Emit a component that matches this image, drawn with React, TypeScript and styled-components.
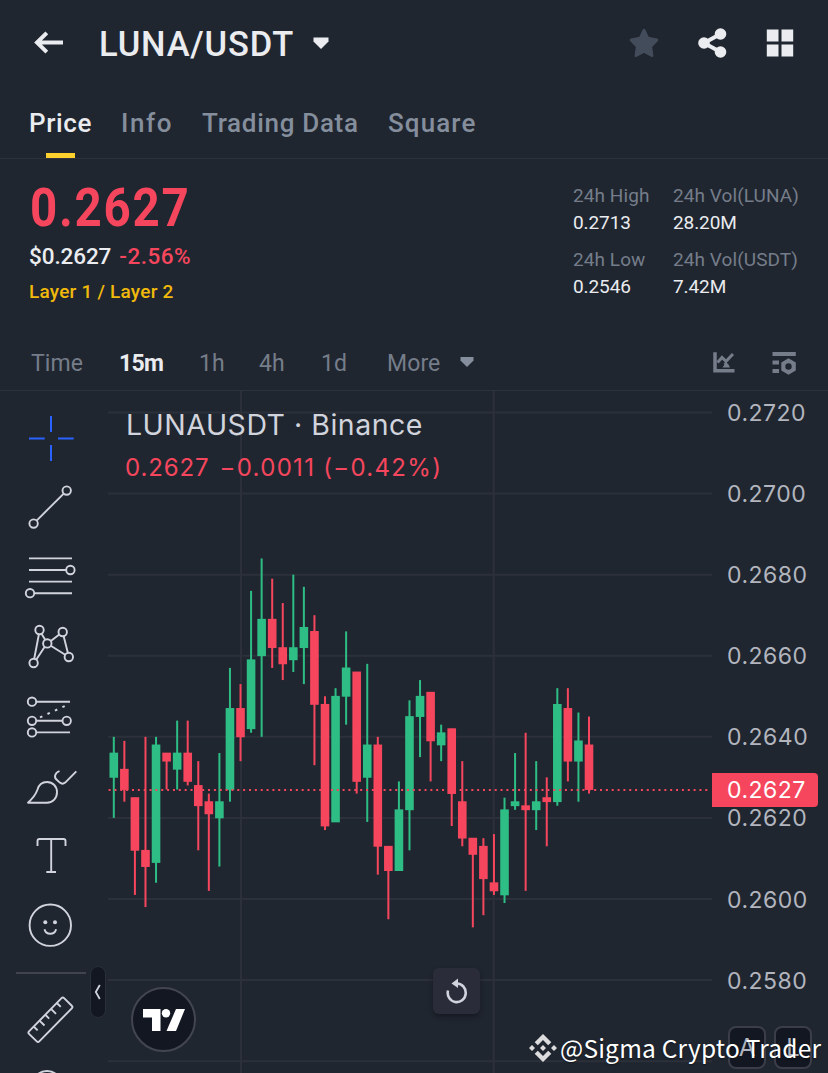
import React from 'react';
import styled, { createGlobalStyle } from 'styled-components';

const c = {
  bg: '#202630',
  line: '#2d323d',
  grid: '#2b303a',
  text: '#eaecef',
  muted: '#848e9c',
  dim: '#757d8a',
  red: '#f6465d',
  green: '#2ebd85',
  yellow: '#fcd02d',
  tool: '#d1d4dc',
};

const GlobalStyle = createGlobalStyle`
  * { box-sizing: border-box; }
  html, body { margin: 0; background: ${c.bg}; }
  body { overflow: hidden; }
`;

const Screen = styled.div`
  width: 828px;
  height: 1073px;
  display: flex;
  flex-direction: column;
  overflow: hidden;
  background: ${c.bg};
  color: ${c.text};
  font-family: Roboto, 'Liberation Sans', sans-serif;
  white-space: nowrap;
`;

const Header = styled.header`
  height: 88px;
  flex: none;
  display: flex;
  align-items: center;
  padding: 0 34px 3px 33px;
`;

const PairName = styled.h1`
  margin: 2px 0 0 36px;
  width: 194px;
  font-size: 34.5px;
  line-height: 44px;
  font-weight: 500;
  letter-spacing: 0.8px;
`;

const Caret = styled.svg<{ $gap: number }>`
  display: block;
  margin-left: ${(p) => p.$gap}px;
`;

const HeaderActions = styled.div`
  margin-left: auto;
  display: flex;
  align-items: center;
  gap: 39px;
`;

const Tabs = styled.nav`
  height: 71px;
  flex: none;
  display: flex;
  padding-left: 29px;
  border-bottom: 1px solid ${c.line};
`;

const Tab = styled.div<{ $active?: boolean; $width: number; $spacing: number }>`
  width: ${(p) => p.$width}px;
  display: flex;
  flex-direction: column;
  justify-content: space-between;
  padding-top: 19px;
  font-size: 26px;
  line-height: 32px;
  font-weight: 500;
  letter-spacing: ${(p) => p.$spacing}px;
  color: ${(p) => (p.$active ? c.text : c.muted)};
`;

const TabMark = styled.span`
  display: block;
  width: 29px;
  height: 5px;
  margin-left: 17px;
  background: ${c.yellow};
`;

const Summary = styled.section`
  height: 178px;
  flex: none;
  display: flex;
  justify-content: space-between;
  padding: 19px 24px 0 29px;
`;

const LastPrice = styled.div`
  width: 190px;
  height: 58px;
  padding-left: 1px;
  font-size: 54px;
  line-height: 60px;
  font-weight: 700;
  letter-spacing: 2px;
  color: ${c.red};
  transform: scaleX(0.88);
  transform-origin: left;
`;

const PriceLine = styled.div`
  display: flex;
  gap: 8px;
  margin-top: 5px;
  font-size: 22.5px;
  line-height: 30px;
  font-weight: 500;
  letter-spacing: -0.1px;
`;

const Change = styled.span`
  letter-spacing: 0.5px;
  color: ${c.red};
`;

const Category = styled.div`
  margin-top: 8px;
  font-size: 19px;
  line-height: 26px;
  font-weight: 500;
  letter-spacing: 0.22px;
  color: #f0b90b;
`;

const Stats = styled.div`
  display: grid;
  grid-template-columns: 100px 131px;
  grid-auto-rows: 64px;
  padding-top: 5px;
`;

const StatLabel = styled.div`
  font-size: 19px;
  line-height: 26px;
  letter-spacing: 0.08px;
  color: ${c.dim};
`;

const StatValue = styled.div`
  font-size: 19px;
  line-height: 27px;
  letter-spacing: -0.1px;
`;

const Intervals = styled.div`
  height: 54px;
  flex: none;
  display: flex;
  align-items: center;
  padding: 0 31px 1px 31px;
  border-bottom: 1px solid ${c.line};
`;

const Interval = styled.div<{ $active?: boolean; $width: number }>`
  width: ${(p) => p.$width}px;
  padding-top: 2px;
  font-size: 23px;
  line-height: 30px;
  font-weight: ${(p) => (p.$active ? 700 : 400)};
  letter-spacing: ${(p) => (p.$active ? -0.7 : 0.1)}px;
  color: ${(p) => (p.$active ? c.text : c.dim)};
`;

const IntervalActions = styled.div`
  margin-left: auto;
  display: flex;
  align-items: center;
  gap: 36px;
`;

const ChartArea = styled.main`
  flex: 1;
  min-height: 0;
  display: flex;
  position: relative;
  overflow: hidden;
`;

const Toolbar = styled.aside`
  width: 108px;
  flex: none;
  padding: 13px 0 0 16px;
  display: flex;
  flex-direction: column;
`;

const ToolIcon = styled.svg<{ $color?: string }>`
  display: block;
  flex: none;
  width: 70px;
  height: 70px;
  fill: none;
  stroke: ${(p) => p.$color || c.tool};
  stroke-width: 1.9;
`;

const ToolDivider = styled.div`
  width: 70px;
  height: 2px;
  flex: none;
  margin: 8px 0 11px;
  background: #41444f;
`;

const Plot = styled.div`
  width: 604px;
  flex: none;
  position: relative;
`;

const PlotCanvas = styled.svg`
  display: block;
`;

const Legend = styled.div`
  position: absolute;
  left: 17px;
  top: 13px;
  font-family: Inter, sans-serif;
`;

const LegendTitle = styled.div`
  padding-left: 1px;
  font-size: 28.5px;
  line-height: 41px;
  letter-spacing: 0.5px;
  color: #d1d4dc;
`;

const LegendValues = styled.div`
  display: flex;
  gap: 10px;
  margin-top: 5px;
  font-size: 24px;
  line-height: 36px;
  letter-spacing: 0.9px;
  color: ${c.red};
`;

const LegendChange = styled.span`
  letter-spacing: 1.3px;
`;

const Axis = styled.div`
  width: 116px;
  flex: none;
  position: relative;
  padding: 6px 0 0 15px;
  font-family: Inter, sans-serif;
  font-size: 23px;
  letter-spacing: 0.5px;
  color: #b2b5be;
`;

const AxisLabel = styled.div`
  height: 81.1px;
  line-height: 32px;
`;

const PriceTag = styled.div`
  position: absolute;
  left: 0;
  top: 382px;
  width: 106px;
  height: 34px;
  padding-left: 15px;
  line-height: 35px;
  border-radius: 0 4px 4px 0;
  background: ${c.red};
  color: #fff;
`;

const CollapseHandle = styled.button`
  position: absolute;
  left: 90px;
  top: 575px;
  width: 16px;
  height: 52px;
  padding: 0;
  display: grid;
  place-items: center;
  border: 1px solid #2a2e39;
  border-radius: 8px;
  background: #131722;
`;

const BrandBadge = styled.div`
  position: absolute;
  left: 131px;
  top: 596px;
  width: 65px;
  height: 65px;
  display: grid;
  place-items: center;
  border: 2px solid #434651;
  border-radius: 50%;
  background: #131722;
`;

const ResetButton = styled.button`
  position: absolute;
  left: 433px;
  top: 577px;
  width: 47px;
  height: 46px;
  padding: 0;
  display: grid;
  place-items: center;
  border: 0;
  border-radius: 6px;
  background: #2a2d39;
  box-shadow: 0 3px 5px rgba(10, 12, 18, 0.45);
`;

const ScaleButtons = styled.div`
  position: absolute;
  left: 728px;
  top: 635px;
  display: flex;
  gap: 8px;
`;

const ScaleButton = styled.button`
  width: 38px;
  height: 43px;
  padding: 0;
  border: 2px solid #3b3e49;
  border-radius: 8px;
  background: #131722;
  color: #b2b5be;
  font: 400 24px/36px Inter, sans-serif;
`;

const Watermark = styled.div`
  position: absolute;
  left: 529px;
  top: 638px;
  display: flex;
  align-items: center;
  gap: 3px;
  height: 38px;
  color: #fff;
  font-family: 'Noto Sans CJK SC', sans-serif;
  font-size: 24.5px;
  line-height: 38px;
  letter-spacing: 0.2px;
  text-shadow: 0 1px 2px rgba(0, 0, 0, 0.5);
`;

/* Prices are in units of 0.0001: high, body top, body bottom, low. */
type Candle = ['u' | 'd', number, number, number, number];
const candles: Candle[] = [
  ['u', 2640, 2636, 2630, 2620], ['d', 2639, 2632, 2627, 2624], ['d', 2625, 2625, 2612, 2601],
  ['d', 2640, 2612, 2608, 2598], ['u', 2640, 2638, 2609, 2604], ['d', 2636, 2636, 2634, 2627],
  ['u', 2644, 2636, 2632, 2627], ['d', 2644, 2636, 2629, 2628], ['d', 2634, 2628, 2623, 2612],
  ['d', 2626, 2624, 2621, 2602], ['u', 2636, 2624, 2620, 2608], ['u', 2657, 2647, 2627, 2624],
  ['d', 2653, 2647, 2640, 2634], ['u', 2676, 2659, 2642, 2641], ['u', 2684, 2669, 2660, 2640],
  ['d', 2679, 2669, 2662, 2657], ['d', 2673, 2662, 2658, 2654], ['u', 2680, 2662, 2659, 2656],
  ['u', 2677, 2667, 2662, 2653], ['d', 2670, 2666, 2648, 2633], ['d', 2650, 2648, 2618, 2617],
  ['u', 2652, 2650, 2619, 2619], ['u', 2666, 2657, 2650, 2643], ['d', 2656, 2656, 2629, 2626],
  ['u', 2658, 2638, 2630, 2619], ['d', 2640, 2638, 2613, 2606], ['d', 2613, 2613, 2607, 2595],
  ['u', 2629, 2622, 2607, 2607], ['u', 2649, 2645, 2622, 2612], ['u', 2654, 2650, 2645, 2635],
  ['d', 2651, 2651, 2639, 2629], ['u', 2643, 2641, 2638, 2634], ['d', 2642, 2642, 2626, 2618],
  ['d', 2634, 2624, 2615, 2613], ['d', 2615, 2615, 2611, 2593], ['d', 2615, 2613, 2605, 2596],
  ['d', 2616, 2604, 2602, 2601], ['u', 2625, 2622, 2601, 2599], ['u', 2636, 2624, 2623, 2622],
  ['d', 2641, 2623, 2622, 2602], ['u', 2634, 2624, 2622, 2617], ['d', 2630, 2625, 2624, 2613],
  ['u', 2652, 2648, 2624, 2623], ['d', 2652, 2647, 2634, 2629], ['u', 2646, 2639, 2634, 2624],
  ['d', 2645, 2638, 2627, 2626],
];

const priceY = (p: number) => 21.5 + (2720 - p) * 4.054;
const candleX = (i: number) => 5.8 + i * 10.56;
const gridPrices = [2720, 2700, 2680, 2660, 2640, 2620, 2600, 2580, 2560];
const axisPrices = gridPrices.slice(0, 8);

function CandleChart() {
  return (
    <PlotCanvas width="604" height="682" viewBox="0 0 604 682">
      <g stroke={c.grid} strokeWidth="2">
        {gridPrices.map((p) => (
          <path key={p} d={`M0 ${priceY(p)}H604`} />
        ))}
        <path d="M133 0V682M385.7 0V682" />
      </g>
      {candles.map(([dir, high, top, bottom, low], i) => {
        const color = dir === 'u' ? c.green : c.red;
        return (
          <g key={i} fill={color}>
            <rect x={candleX(i) - 1} y={priceY(high)} width="2" height={priceY(low) - priceY(high)} />
            <rect x={candleX(i) - 4.3} y={priceY(top) - 0.4} width="8.6" height={priceY(bottom) - priceY(top) + 0.8} />
          </g>
        );
      })}
      <path d={`M0.6 ${priceY(2627) + 0.5}H602`} stroke={c.red} strokeWidth="2" strokeDasharray="2 3.85" />
    </PlotCanvas>
  );
}

function DrawingTools() {
  return (
    <Toolbar>
      <ToolIcon $color="#2962ff" viewBox="0 0 70 70">
        <path strokeWidth="2" d="M35 12V28M35 41V57M13 34.4H28.7M42 34.4H57.7" />
      </ToolIcon>
      <ToolIcon viewBox="0 0 70 70">
        <circle cx="50.7" cy="16.6" r="4.2" />
        <circle cx="17.6" cy="49.6" r="4.2" />
        <path d="M20.6 46.6L47.7 19.6" />
      </ToolIcon>
      <ToolIcon viewBox="0 0 70 70">
        <path d="M13 14.4H56M13 26H50M13 37.6H56M18.2 49.2H56" />
        <circle cx="54.4" cy="26" r="4.2" />
        <circle cx="14" cy="49.2" r="4.2" />
      </ToolIcon>
      <ToolIcon viewBox="0 0 70 70">
        <circle cx="23.5" cy="16" r="4.2" />
        <circle cx="46.7" cy="18" r="4.2" />
        <circle cx="31.3" cy="29.4" r="4.2" />
        <circle cx="52.8" cy="43" r="4.2" />
        <circle cx="17.6" cy="49" r="4.2" />
        <path d="M25.5 19.7L29.2 25.8M34.8 27L43.3 20.4M47.6 22.1L51.9 38.9M34.8 31.7L49.2 40.8M28.7 32.7L20.2 45.7M22.9 20.2L18.2 44.8" />
      </ToolIcon>
      <ToolIcon viewBox="0 0 70 70">
        <circle cx="16" cy="17.7" r="4.2" />
        <circle cx="16" cy="36.8" r="4.2" />
        <circle cx="50.7" cy="36.8" r="4.2" />
        <circle cx="16" cy="48.4" r="4.2" />
        <path d="M20.2 17.7H54M20.2 36.8H46.5M20.2 48.4H54" />
        <path strokeDasharray="2.6 5.6" strokeWidth="2" d="M24 33.4L52 20.6" />
      </ToolIcon>
      <ToolIcon viewBox="0 0 70 70" strokeLinejoin="round">
        <path d="M12 48.7H31C37 48.7 41 44 41 38.3C41 32 36.5 28 31 28C25.5 28 22.5 31.5 21.3 36C19.8 40.5 16.5 44.5 12 48.7Z" />
        <path d="M43.5 17C38 19.5 38 24 41 26L43.8 28.6Q46.5 30.7 49.2 28.6L60.3 17.3" />
      </ToolIcon>
      <ToolIcon viewBox="0 0 70 70">
        <path d="M21.5 22V17Q21.5 15 23.5 15H47.5Q49.5 15 49.5 17V22M35.2 15V48M30.3 48H40" />
      </ToolIcon>
      <ToolIcon viewBox="0 0 70 70">
        <circle cx="34.3" cy="31.2" r="20.7" />
        <circle cx="29.3" cy="28.3" r="2" fill={c.tool} stroke="none" />
        <circle cx="39" cy="28.3" r="2" fill={c.tool} stroke="none" />
        <path d="M28.5 35.3C30 41.3 38.6 41.3 40.1 35.3" />
      </ToolIcon>
      <ToolDivider />
      <ToolIcon viewBox="0 0 70 70">
        <g transform="translate(34.4 34.8) rotate(-45.5)">
          <rect x="-25" y="-7.2" width="50" height="14.4" rx="1.8" />
          <path d="M-16.5 -7.2V-1.7M-8.2 -7.2V-0.2M0 -7.2V-1.7M8.2 -7.2V-0.2M16.5 -7.2V-1.7" />
        </g>
      </ToolIcon>
      <ToolIcon viewBox="0 0 70 70">
        <circle cx="31" cy="31" r="15" />
      </ToolIcon>
    </Toolbar>
  );
}

const tabs = [
  { label: 'Price', width: 92, spacing: 0.6, active: true },
  { label: 'Info', width: 81, spacing: 1.6 },
  { label: 'Trading Data', width: 186, spacing: 0.7 },
  { label: 'Square', width: 100, spacing: 1.1 },
];

const intervals = [
  { label: 'Time', width: 88 },
  { label: '15m', width: 80, active: true },
  { label: '1h', width: 60 },
  { label: '4h', width: 62 },
  { label: '1d', width: 66 },
  { label: 'More', width: 52 },
];

const stats = [
  { label: '24h High', value: '0.2713' },
  { label: '24h Vol(LUNA)', value: '28.20M' },
  { label: '24h Low', value: '0.2546' },
  { label: '24h Vol(USDT)', value: '7.42M' },
];

export default function App() {
  return (
    <Screen>
      <GlobalStyle />
      <Header>
        <svg width="30" height="24" viewBox="0 0 30 24" fill="none" stroke={c.text} strokeWidth="4">
          <path d="M30 11.5H4M13.8 1.8L4 11.5L13.8 21.2" />
        </svg>
        <PairName>LUNA/USDT</PairName>
        <Caret $gap={20} width="16" height="12" viewBox="0 0 16 12" fill={c.text}>
          <path d="M.5 .5H15.5V4.5L8 12L.5 4.5Z" />
        </Caret>
        <HeaderActions>
          <svg width="30" height="30" viewBox="0 0 30 30" fill="#434c5a" stroke="#434c5a" strokeWidth="3" strokeLinejoin="round">
            <path d="M15 2.3L18.8 10.3L27.8 12L21.6 18.4L22.9 27.5L15 23.3L7.1 27.5L8.4 18.4L2.2 12L11.2 10.3Z" />
          </svg>
          <svg width="29" height="30" viewBox="0 0 29 30" fill={c.text}>
            <path d="M6 15L22.5 6M6 15L22.5 24" stroke={c.text} strokeWidth="4" />
            <circle cx="6" cy="15" r="5.8" />
            <circle cx="22.5" cy="6" r="5.8" />
            <circle cx="22.5" cy="24" r="5.8" />
          </svg>
          <svg width="28" height="28" viewBox="0 0 28 28" fill={c.text}>
            <path d="M.8 .5H12.5V12.5H.8ZM15.5 .5H27.2V12.5H15.5ZM.8 15.5H12.5V27.5H.8ZM15.5 15.5H27.2V27.5H15.5Z" />
          </svg>
        </HeaderActions>
      </Header>

      <Tabs>
        {tabs.map((t) => (
          <Tab key={t.label} $active={t.active} $width={t.width} $spacing={t.spacing}>
            {t.label}
            {t.active && <TabMark />}
          </Tab>
        ))}
      </Tabs>

      <Summary>
        <div>
          <LastPrice>0.2627</LastPrice>
          <PriceLine>
            <span>$0.2627</span>
            <Change>-2.56%</Change>
          </PriceLine>
          <Category>Layer 1 / Layer 2</Category>
        </div>
        <Stats>
          {stats.map((s) => (
            <div key={s.label}>
              <StatLabel>{s.label}</StatLabel>
              <StatValue>{s.value}</StatValue>
            </div>
          ))}
        </Stats>
      </Summary>

      <Intervals>
        {intervals.map((t) => (
          <Interval key={t.label} $active={t.active} $width={t.width}>
            {t.label}
          </Interval>
        ))}
        <Caret $gap={21} width="14" height="12" viewBox="0 0 14 12" fill={c.muted}>
          <path d="M.5 0H13.5V3.5L7 10L.5 3.5Z" />
        </Caret>
        <IntervalActions>
          <svg width="22" height="22" viewBox="0 0 22 22" fill="none" stroke={c.dim} strokeWidth="3.5">
            <path d="M2 .3V18.7H21.5" />
            <path strokeWidth="3" d="M4.5 10.5L9 5.5L13 9.3L20 2" />
            <path fill={c.dim} stroke="none" d="M12.8 10L15.5 12.5L17 15.5H9.5L11.5 12.5L10.5 11.5Z" />
          </svg>
          <svg width="26" height="24" viewBox="0 0 26 24" fill={c.dim}>
            <path d="M1.5 1H24.8V5H1.500ZM1.5 9.5H8V13.5H1.500ZM1.5 18H8V22H1.500Z" />
            <path fillRule="evenodd" d="M17.5 7.3L24.8 11.5V19.5L17.5 23.8L10.3 19.5V11.5ZM17.5 12.3A3.2 3.2 0 1 0 17.5 18.7A3.2 3.2 0 1 0 17.5 12.3Z" />
          </svg>
        </IntervalActions>
      </Intervals>

      <ChartArea>
        <DrawingTools />
        <Plot>
          <CandleChart />
          <Legend>
            <LegendTitle>LUNAUSDT · Binance</LegendTitle>
            <LegendValues>
              <span>0.2627</span>
              <LegendChange>−0.0011 (−0.42%)</LegendChange>
            </LegendValues>
          </Legend>
        </Plot>
        <Axis>
          {axisPrices.map((p) => (
            <AxisLabel key={p}>{(p / 10000).toFixed(4)}</AxisLabel>
          ))}
          <PriceTag>0.2627</PriceTag>
        </Axis>

        <CollapseHandle aria-label="Collapse">
          <svg width="8" height="16" viewBox="0 0 8 16" fill="none" stroke={c.tool} strokeWidth="1.8">
            <path d="M5.8 1L1.8 8L5.8 15" />
          </svg>
        </CollapseHandle>
        <BrandBadge>
          <svg width="42" height="22" viewBox="0 0 42 22" fill="#fff">
            <path d="M0 0H17.5V22H9V8.5H0Z" />
            <circle cx="23" cy="4.3" r="4.2" />
            <path d="M33 0H42L33 22H23.5Z" />
          </svg>
        </BrandBadge>
        <ResetButton aria-label="Reset">
          <svg width="24" height="26" viewBox="0 0 24 26" fill="none" stroke={c.tool} strokeWidth="2.6">
            <path d="M3 12.5A9 9.3 0 1 0 12 5.5" />
            <path d="M13 .5V10L6.5 5.5Z" fill={c.tool} stroke="none" />
          </svg>
        </ResetButton>
        <ScaleButtons>
          <ScaleButton>A</ScaleButton>
          <ScaleButton>L</ScaleButton>
        </ScaleButtons>
        <Watermark>
          <svg width="28" height="28" viewBox="0 0 28 28" fill="#dcdcdd">
            <path d="M14 0L22.3 8.3L19.2 11.3L14 6.1L8.8 11.3L5.7 8.3ZM3 11L6 14L3 17L0 14ZM25 11L28 14L25 17L22 14ZM14 11L17 14L14 17L11 14ZM14 21.9L19.2 16.7L22.3 19.7L14 28L5.7 19.7L8.8 16.7Z" />
          </svg>
          @Sigma Crypto Trader
        </Watermark>
      </ChartArea>
    </Screen>
  );
}
